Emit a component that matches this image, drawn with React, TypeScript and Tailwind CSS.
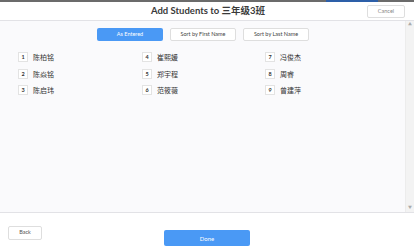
const students = [
  "陈柏铭", "陈焱铭", "陈启玮",
  "崔熙媛", "郑宇程", "范筱薇",
  "冯俊杰", "周睿", "曾建萍",
];

const font = { fontFamily: 'Lato, "Noto Sans CJK SC", sans-serif' };

export default function App() {
  return (
    <div className="flex h-[249px] w-[414px] flex-col bg-white text-[#333]" style={font}>
      {/* top strip */}
      <div className="flex h-[2px] shrink-0 bg-[#6b6b6b]">
        <div className="ml-[326px] w-[52px] bg-[#2d5fa8]" />
      </div>
      {/* header */}
      <div className="relative flex h-[19px] shrink-0 items-center justify-center border-b border-[#e2e2e6]">
        <span className="pl-[2px] text-[9.5px] font-bold text-[#3a3a3a]">Add Students to 三年级3班</span>
        <button className="absolute right-[9px] top-[3px] h-[13px] w-[38px] rounded-[2px] border border-[#dedede] bg-white text-[5.5px] text-[#888]">
          Cancel
        </button>
      </div>
      {/* body */}
      <div className="flex min-h-0 flex-1">
        <div className="flex-1 bg-[#fafafc] pt-[7px]">
          <div className="flex justify-center gap-[7px] pl-[1px]">
            <button className="h-[13px] w-[66px] rounded-[2px] bg-[#4a99f5] text-[5.5px] text-white">As Entered</button>
            <button className="h-[13px] w-[66px] rounded-[2px] border border-[#dedede] bg-white text-[5.5px] text-[#444]">Sort by First Name</button>
            <button className="h-[13px] w-[66px] rounded-[2px] border border-[#dedede] bg-white text-[5.5px] text-[#444]">Sort by Last Name</button>
          </div>
          <div className="mt-[11px] grid grid-flow-col grid-cols-[124px_123px_124px] grid-rows-3 gap-y-[6px] pl-[18px]">
            {students.map((n, i) => (
              <div key={i} className="flex items-center gap-[5px]">
                <div className="flex h-[10px] w-[10px] items-center justify-center border border-[#e3e3e3] bg-white text-[5.5px] font-bold text-[#333]">
                  {i + 1}
                </div>
                <span className="text-[7px] text-[#333]">{n}</span>
              </div>
            ))}
          </div>
        </div>
        <div className="flex w-[9px] flex-col justify-between border-l border-[#ececec] bg-[#f3f3f3] py-[2px] text-center text-[4px] leading-none text-[#aaa]">
          <span>▲</span>
          <span>▼</span>
        </div>
      </div>
      {/* footer */}
      <div className="relative flex h-[37px] shrink-0 items-center border-t border-[#e2e2e6] pt-[3px]">
        <button className="ml-[8px] h-[14px] w-[34px] rounded-[2px] border border-[#dedede] bg-white text-[5.5px] text-[#555]">
          Back
        </button>
        <button className="absolute left-[164px] top-[17px] h-[16px] w-[86px] rounded-[2px] bg-[#4a99f5] text-[6px] text-white">
          Done
        </button>
      </div>
    </div>
  );
}
